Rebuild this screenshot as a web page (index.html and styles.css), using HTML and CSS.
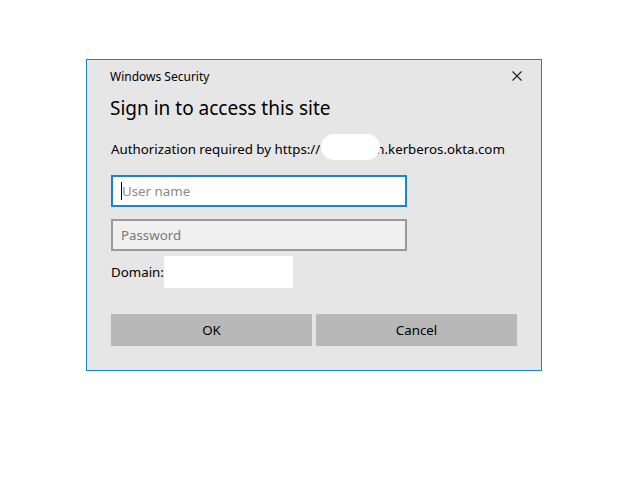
FILE: index.html
```html
<!DOCTYPE html>
<html>
<head>
<meta charset="utf-8">
<link rel="stylesheet" href="styles.css">
</head>
<body>
<div class="dialog">
  <div class="titlebar">
    <span class="app">Windows Security</span>
    <svg class="close" width="10" height="10" viewBox="0 0 10 10"><path d="M0.5 0.5 L9.5 9.5 M9.5 0.5 L0.5 9.5" stroke="#1f1f1f" stroke-width="1.1" fill="none"/></svg>
  </div>
  <div class="heading">Sign in to access this site</div>
  <div class="auth">Authorization required by https://<span class="redact"><span class="blob"></span></span>n.kerberos.okta.com</div>
  <div class="field focused"><span class="caret"></span><span class="ph">User name</span></div>
  <div class="field pwd"><span class="ph">Password</span></div>
  <div class="domain"><span>Domain:</span><span class="dbox"></span></div>
  <div class="buttons">
    <div class="btn">OK</div>
    <div class="btn">Cancel</div>
  </div>
</div>
</body>
</html>
```
FILE: styles.css
```css
html, body { margin: 0; padding: 0; background: #ffffff; }
body { font-family: "Noto Sans", "Open Sans", sans-serif; color: #000; }
.dialog {
  box-sizing: border-box;
  margin: 59px 0 0 86px;
  width: 456px;
  height: 312px;
  background: #e6e6e6;
  border: 1px solid #1883d7;
  padding: 0 24px 0 24px;
}
.titlebar {
  display: flex;
  align-items: center;
  justify-content: space-between;
  height: 32px;
  margin-right: -5px;
}
.app { font-size: 12px; color: #000; margin-left: -1px; }
.close { display: block; }
.heading { font-size: 19px; line-height: 26px; margin-top: 3px; margin-left: -1px; color: #000; }
.auth { font-size: 13.3px; line-height: 20px; margin-top: 18px; color: #000; white-space: nowrap; }
.redact { position: relative; display: inline-block; width: 56px; height: 1px; }
.blob {
  position: absolute;
  left: 1px; top: -19px;
  width: 59px; height: 26px;
  border-radius: 13px;
  background: #fff;
  z-index: 1;
}
.field {
  box-sizing: border-box;
  width: 296px;
  height: 32px;
  background: #ffffff;
  border: 2px solid #1883d7;
  display: flex;
  align-items: center;
  padding-left: 8px;
  font-size: 13.3px;
}
.focused { margin-top: 16px; }
.caret { width: 1px; height: 18px; background: #000; }
.ph { color: #8a8a8a; }
.pwd { margin-top: 12px; background: #f0f0f0; border-color: #999999; }
.pwd .ph { color: #7a7a7a; }
.domain { display: flex; align-items: center; margin-top: 5px; font-size: 13.3px; height: 32px; }
.dbox { width: 129px; height: 32px; background: #fff; margin-left: 0; }
.buttons { display: flex; gap: 4px; margin-top: 26px; }
.btn {
  width: 201px; height: 32px;
  background: #b8b8b8;
  display: flex; align-items: center; justify-content: center;
  font-size: 13.3px; color: #000;
}
```
